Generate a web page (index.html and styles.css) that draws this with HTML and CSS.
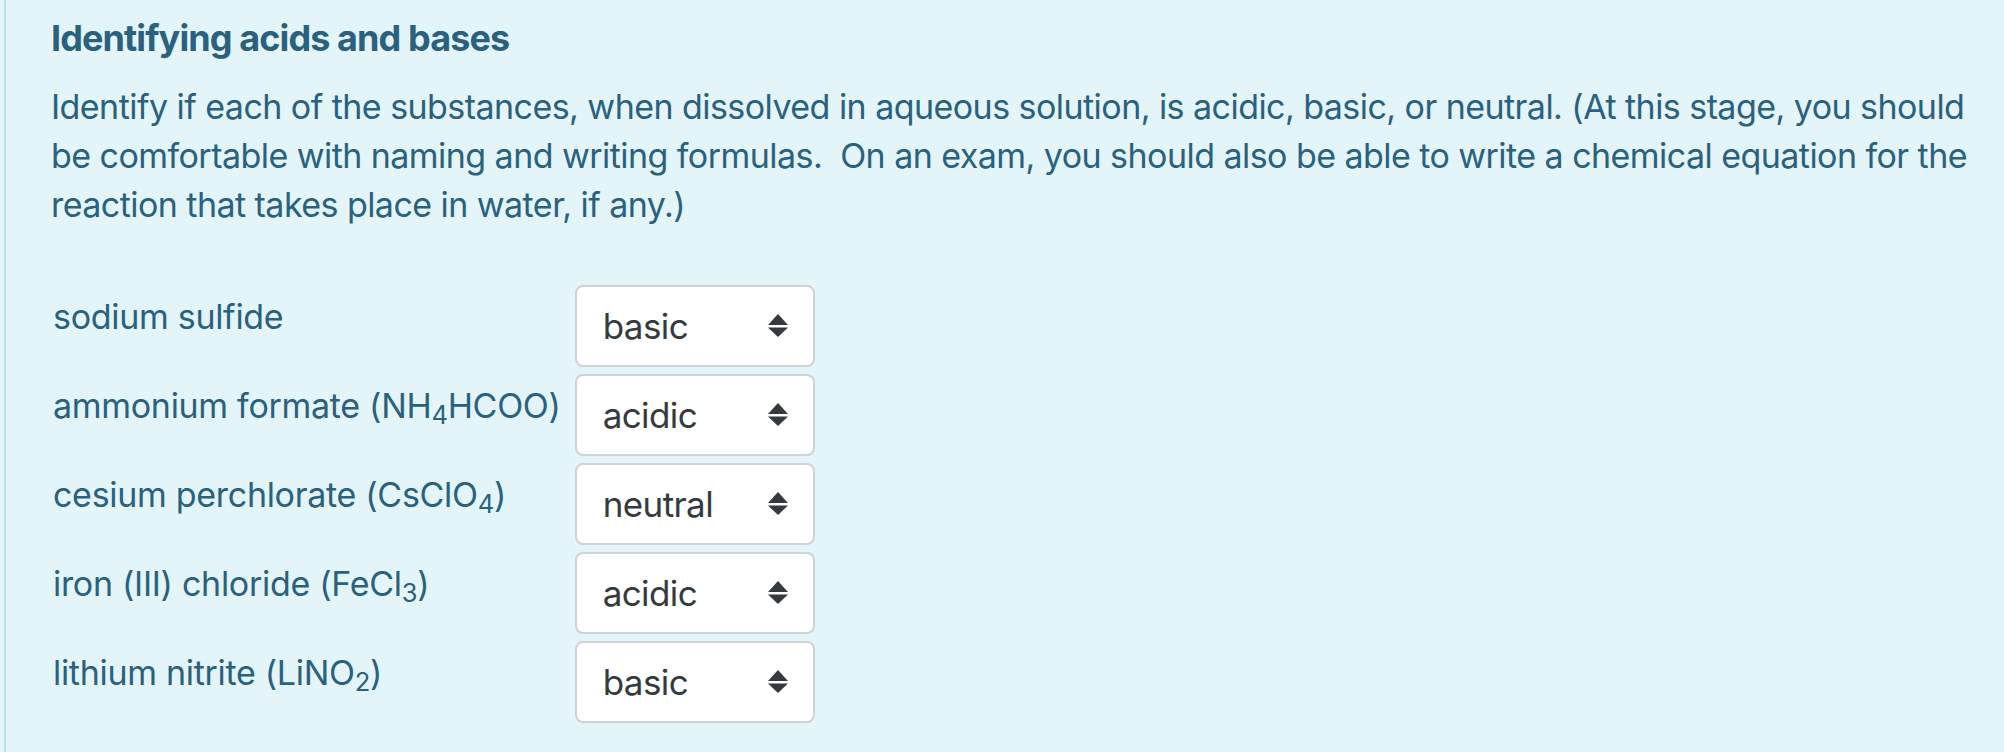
FILE: index.html
```html
<!DOCTYPE html>
<html lang="en">
<head>
<meta charset="utf-8">
<title>Identifying acids and bases</title>
<link rel="stylesheet" href="styles.css">
</head>
<body>
<div class="panel">
  <h3 class="title">Identifying acids and bases</h3>
  <p class="intro">Identify if each of the substances, when dissolved in aqueous solution, is acidic, basic, or neutral. (At this stage, you should be comfortable with naming and writing formulas.&nbsp; On an exam, you should also be able to write a chemical equation for the reaction that takes place in water, if any.)</p>
  <div class="rows">
    <div class="label">sodium sulfide</div>
    <div class="pick">
      <select class="sel"><option>basic</option><option>acidic</option><option>neutral</option></select>
      <svg class="arrows" viewBox="0 0 20 23"><path d="M10 0 L20 11 L0 11 Z"/><path d="M0 13.5 L20 13.5 L10 23 Z"/></svg>
    </div>
    <div class="label">ammonium formate (NH<sub>4</sub>HCOO)</div>
    <div class="pick">
      <select class="sel"><option>acidic</option><option>basic</option><option>neutral</option></select>
      <svg class="arrows" viewBox="0 0 20 23"><path d="M10 0 L20 11 L0 11 Z"/><path d="M0 13.5 L20 13.5 L10 23 Z"/></svg>
    </div>
    <div class="label">cesium perchlorate (CsClO<sub>4</sub>)</div>
    <div class="pick">
      <select class="sel"><option>neutral</option><option>acidic</option><option>basic</option></select>
      <svg class="arrows" viewBox="0 0 20 23"><path d="M10 0 L20 11 L0 11 Z"/><path d="M0 13.5 L20 13.5 L10 23 Z"/></svg>
    </div>
    <div class="label">iron (III) chloride (FeCl<sub>3</sub>)</div>
    <div class="pick">
      <select class="sel"><option>acidic</option><option>basic</option><option>neutral</option></select>
      <svg class="arrows" viewBox="0 0 20 23"><path d="M10 0 L20 11 L0 11 Z"/><path d="M0 13.5 L20 13.5 L10 23 Z"/></svg>
    </div>
    <div class="label">lithium nitrite (LiNO<sub>2</sub>)</div>
    <div class="pick">
      <select class="sel"><option>basic</option><option>acidic</option><option>neutral</option></select>
      <svg class="arrows" viewBox="0 0 20 23"><path d="M10 0 L20 11 L0 11 Z"/><path d="M0 13.5 L20 13.5 L10 23 Z"/></svg>
    </div>
  </div>
</div>
</body>
</html>
```

FILE: styles.css
```css
html, body {
  margin: 0;
  padding: 0;
  background: #e4f5f9;
}

body {
  font-family: Inter, "Noto Sans", "Liberation Sans", sans-serif;
  color: #29617f;
}

.panel {
  margin-left: 4px;
  border-left: 2px solid #b6e3ea;
  padding: 16px 20px 0 45px;
  min-height: 752px;
  box-sizing: border-box;
}

.title {
  margin: 0;
  font-size: 36px;
  line-height: 44px;
  font-weight: 700;
  letter-spacing: -0.9px;
}

.intro {
  margin: 22px 0 0 0;
  font-size: 34px;
  line-height: 49px;
  letter-spacing: -0.55px;
}

.rows {
  margin-top: 56px;
  display: grid;
  grid-template-columns: auto auto;
  justify-content: start;
  column-gap: 14px;
  row-gap: 7px;
}

.label {
  font-size: 34px;
  line-height: 48.6px;
  padding: 8px 0 0 2px;
  letter-spacing: -0.3px;
  white-space: nowrap;
}

.label sub {
  font-size: 0.75em;
  line-height: 0;
  vertical-align: -0.22em;
}

.pick {
  position: relative;
  width: 240px;
  height: 82px;
}

.sel {
  appearance: none;
  -webkit-appearance: none;
  width: 240px;
  height: 82px;
  box-sizing: border-box;
  border: 2px solid #cdd3d9;
  border-radius: 8px;
  background: #ffffff;
  color: #343a40;
  font-family: Inter, "Noto Sans", "Liberation Sans", sans-serif;
  font-size: 35px;
  letter-spacing: -0.6px;
  padding: 0 60px 0 26px;
  margin: 0;
  outline: none;
}

.arrows {
  position: absolute;
  left: 193px;
  top: 29px;
  width: 20px;
  height: 23px;
  fill: #343a40;
  pointer-events: none;
}
```
